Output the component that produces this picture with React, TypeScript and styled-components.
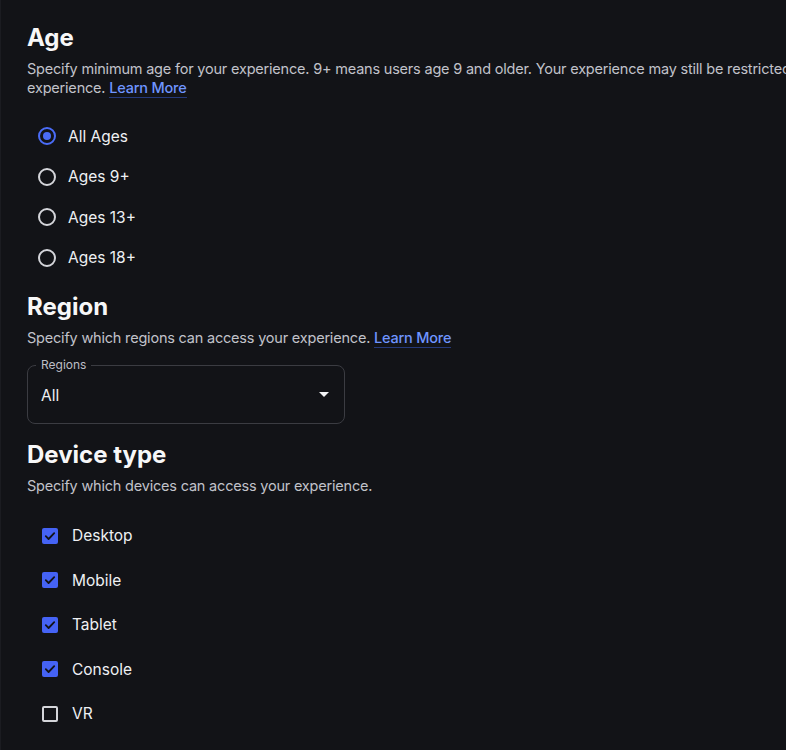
import styled, { createGlobalStyle } from 'styled-components';

const GlobalStyle = createGlobalStyle`
  html, body {
    margin: 0;
    padding: 0;
    background: #121317;
    overflow: hidden;
  }
  body {
    font-family: Inter, "Noto Sans", sans-serif;
    color: #f2f3f5;
  }
`;

const Page = styled.div`
  width: 1000px;
  height: 750px;
  box-sizing: border-box;
  padding: 22px 0 0 26px;
  background: #121317;
  border-left: 1px solid #1b1c21;
`;

const Section = styled.section`
  display: flex;
  flex-direction: column;
  align-items: flex-start;
`;

const Title = styled.h2`
  margin: 0;
  font-size: 24px;
  font-weight: 700;
  line-height: 32px;
  color: #f7f7f8;
`;

const Description = styled.p`
  margin: 6px 0 0 0;
  font-size: 14.5px;
  letter-spacing: -0.2px;
  line-height: 18.5px;
  color: #c1c2ca;
  white-space: nowrap;
`;

const Link = styled.a`
  color: #6f95ff;
  font-weight: 500;
  text-decoration: none;
  border-bottom: 1px solid #25397a;
  padding-bottom: 1px;
  cursor: pointer;
`;

const OptionList = styled.div<{ $gap: number }>`
  display: flex;
  flex-direction: column;
  gap: ${({ $gap }) => $gap}px;
`;

const RadioList = styled(OptionList)`
  margin: 28px 0 0 11px;
`;

const CheckList = styled(OptionList)`
  margin: 29px 0 0 15px;
`;

const OptionRow = styled.label`
  display: flex;
  align-items: center;
  height: 22px;
  font-size: 15.5px;
  color: #eef0f3;
  cursor: pointer;
`;

const RadioCircle = styled.span<{ $checked: boolean }>`
  width: 18px;
  height: 18px;
  box-sizing: border-box;
  border-radius: 50%;
  border: 2px solid ${({ $checked }) => ($checked ? '#4a6cf7' : '#d4d5da')};
  display: flex;
  align-items: center;
  justify-content: center;
  margin-right: 12px;

  &::after {
    content: '';
    display: ${({ $checked }) => ($checked ? 'block' : 'none')};
    width: 8px;
    height: 8px;
    border-radius: 50%;
    background: #4a6cf7;
  }
`;

const CheckBox = styled.span<{ $checked: boolean }>`
  width: 16px;
  height: 16px;
  box-sizing: border-box;
  border-radius: 2px;
  background: ${({ $checked }) => ($checked ? '#4563f5' : 'transparent')};
  border: ${({ $checked }) => ($checked ? 'none' : '2px solid #d4d5da')};
  display: flex;
  align-items: center;
  justify-content: center;
  margin-right: 14px;
`;

const RegionSection = styled(Section)`
  margin-top: 22px;
`;

const DeviceSection = styled(Section)`
  margin-top: 15px;
`;

const SelectBox = styled.div`
  position: relative;
  margin-top: 18px;
  width: 318px;
  height: 59px;
  box-sizing: border-box;
  border: 1px solid #3b3c42;
  border-radius: 8px;
  display: flex;
  align-items: center;
  justify-content: space-between;
  padding: 0 13px 0 13px;
  cursor: pointer;
`;

const SelectLegend = styled.span`
  position: absolute;
  top: -8px;
  left: 8px;
  padding: 0 5px;
  background: #121317;
  font-size: 12px;
  line-height: 14px;
  color: #bdbec6;
`;

const SelectValue = styled.span`
  font-size: 15.5px;
  color: #eef0f3;
  margin-top: 2px;
`;

const Caret = styled.span`
  width: 0;
  height: 0;
  border-left: 5px solid transparent;
  border-right: 5px solid transparent;
  border-top: 5px solid #f2f3f5;
  margin-right: 2px;
`;

const ages = ['All Ages', 'Ages 9+', 'Ages 13+', 'Ages 18+'];
const devices = [
  { name: 'Desktop', checked: true },
  { name: 'Mobile', checked: true },
  { name: 'Tablet', checked: true },
  { name: 'Console', checked: true },
  { name: 'VR', checked: false },
];

const CheckMark = () => (
  <svg width="12" height="12" viewBox="0 0 12 12" fill="none">
    <path d="M1.8 6.2 L4.6 9 L10.2 3.2" stroke="#121317" strokeWidth="1.8" strokeLinecap="round" strokeLinejoin="round" />
  </svg>
);

const App: React.FC = () => {
  return (
    <>
      <GlobalStyle />
      <Page>
        <Section>
          <Title>Age</Title>
          <Description>
            Specify minimum age for your experience. 9+ means users age 9 and older. Your experience may still be restricted based on
            the rules of your
            <br />
            experience. <Link>Learn More</Link>
          </Description>
          <RadioList $gap={18.5}>
            {ages.map((age, index) => (
              <OptionRow key={age}>
                <RadioCircle $checked={index === 0} />
                {age}
              </OptionRow>
            ))}
          </RadioList>
        </Section>

        <RegionSection>
          <Title>Region</Title>
          <Description>
            Specify which regions can access your experience. <Link>Learn More</Link>
          </Description>
          <SelectBox>
            <SelectLegend>Regions</SelectLegend>
            <SelectValue>All</SelectValue>
            <Caret />
          </SelectBox>
        </RegionSection>

        <DeviceSection>
          <Title>Device type</Title>
          <Description>Specify which devices can access your experience.</Description>
          <CheckList $gap={22.5}>
            {devices.map((device) => (
              <OptionRow key={device.name}>
                <CheckBox $checked={device.checked}>{device.checked && <CheckMark />}</CheckBox>
                {device.name}
              </OptionRow>
            ))}
          </CheckList>
        </DeviceSection>
      </Page>
    </>
  );
};

export default App;
